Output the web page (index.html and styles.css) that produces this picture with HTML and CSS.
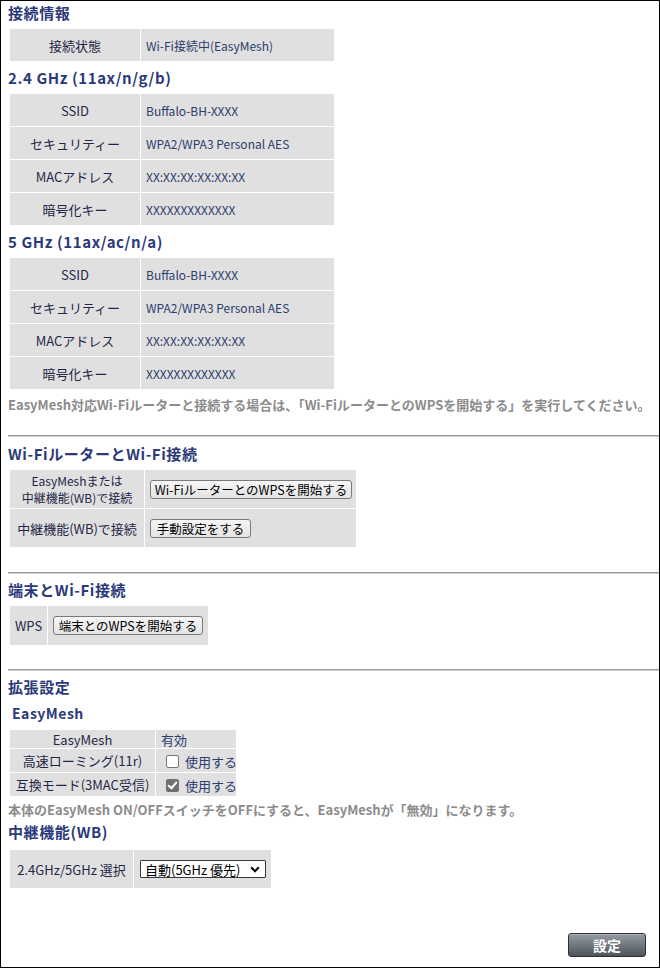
FILE: index.html
```html
<!DOCTYPE html>
<html lang="ja">
<head>
<meta charset="utf-8">
<title>接続情報</title>
<link rel="stylesheet" href="styles.css">
</head>
<body>
<div class="page">
  <h2 class="sec-title first">接続情報</h2>
  <table class="grid g-info">
    <tr class="r32"><th>接続状態</th><td>Wi-Fi接続中(EasyMesh)</td></tr>
  </table>

  <h2 class="sec-title">2.4 GHz (11ax/n/g/b)</h2>
  <table class="grid g-info">
    <tr class="r32"><th>SSID</th><td>Buffalo-BH-XXXX</td></tr>
    <tr class="r32"><th>セキュリティー</th><td>WPA2/WPA3 Personal AES</td></tr>
    <tr class="r32"><th>MACアドレス</th><td>XX:XX:XX:XX:XX:XX</td></tr>
    <tr class="r32"><th>暗号化キー</th><td>XXXXXXXXXXXXX</td></tr>
  </table>

  <h2 class="sec-title">5 GHz (11ax/ac/n/a)</h2>
  <table class="grid g-info">
    <tr class="r32"><th>SSID</th><td>Buffalo-BH-XXXX</td></tr>
    <tr class="r32"><th>セキュリティー</th><td>WPA2/WPA3 Personal AES</td></tr>
    <tr class="r32"><th>MACアドレス</th><td>XX:XX:XX:XX:XX:XX</td></tr>
    <tr class="r32"><th>暗号化キー</th><td>XXXXXXXXXXXXX</td></tr>
  </table>

  <p class="note n1">EasyMesh対応Wi-Fiルーターと接続する場合は、「Wi-FiルーターとのWPSを開始する」を実行してください。</p>

  <hr class="rule rule1">
  <h2 class="sec-title after-rule">Wi-FiルーターとWi-Fi接続</h2>
  <table class="grid g-router">
    <tr class="r38"><th class="two-line"><span class="ln">EasyMeshまたは</span><span class="ln">中継機能(WB)で接続</span></th><td><button class="btn btn-router">Wi-FiルーターとのWPSを開始する</button></td></tr>
    <tr class="r38"><th>中継機能(WB)で接続</th><td><button class="btn btn-manual">手動設定をする</button></td></tr>
  </table>

  <hr class="rule rule2">
  <h2 class="sec-title after-rule2">端末とWi-Fi接続</h2>
  <table class="grid g-wps">
    <tr class="r39"><th>WPS</th><td><button class="btn btn-wps">端末とのWPSを開始する</button></td></tr>
  </table>

  <hr class="rule rule3">
  <h2 class="sec-title after-rule2 before-sub">拡張設定</h2>
  <h3 class="sub-title">EasyMesh</h3>
  <table class="grid g-mesh">
    <tr class="r18"><th>EasyMesh</th><td>有効</td></tr>
    <tr class="r23"><th>高速ローミング(11r)</th><td><span class="check"><span class="cb"></span><span class="cb-label">使用する</span></span></td></tr>
    <tr class="r23"><th>互換モード(3MAC受信)</th><td><span class="check"><span class="cb on"><svg viewBox="0 0 13 13" width="13" height="13"><path d="M2.8 6.8 L5.4 9.3 L10.2 3.6" fill="none" stroke="#fff" stroke-width="2.2" stroke-linecap="round" stroke-linejoin="round"/></svg></span><span class="cb-label">使用する</span></span></td></tr>
  </table>
  <p class="note n2">本体のEasyMesh ON/OFFスイッチをOFFにすると、EasyMeshが「無効」になります。</p>

  <h2 class="sec-title relay-title">中継機能(WB)</h2>
  <table class="grid g-relay">
    <tr class="r38"><th>2.4GHz/5GHz 選択</th><td><span class="select"><span class="select-text">自動(5GHz 優先)</span><svg class="chev" viewBox="0 0 10 7" width="10" height="7"><path d="M1.2 1.3 L5 5.2 L8.8 1.3" fill="none" stroke="#000" stroke-width="2"/></svg></span></td></tr>
  </table>

  <div class="footer">
    <button class="save">設定</button>
  </div>
</div>
</body>
</html>
```
FILE: styles.css
```css
* { box-sizing: border-box; }
html, body { margin: 0; padding: 0; background: #fff; }
body {
  font-family: "Noto Sans CJK JP", "Noto Sans", sans-serif;
  color: #1f2747;
}
.page {
  width: 660px;
  height: 968px;
  border: 1px solid #000;
  padding: 3px 0 10px 7px;
  display: flex;
  flex-direction: column;
  align-items: flex-start;
}
.sec-title {
  margin: 7px 0;
  font-size: 15px;
  line-height: 17px;
  letter-spacing: 0.6px;
  font-weight: bold;
  color: #2b3a7b;
}
.sec-title.first { margin-top: 0; }
.sec-title.after-rule { margin-top: 8px; }
.sec-title.after-rule2 { margin-top: 7px; }
.sec-title.before-sub { margin-bottom: 0; }
.sec-title.relay-title { margin: 5px 0 9px; }
.sub-title {
  margin: 10px 0 8px 4px;
  font-size: 14px;
  line-height: 16px;
  letter-spacing: 0.5px;
  font-weight: bold;
  color: #2b3a7b;
}

.grid {
  border-collapse: separate;
  border-spacing: 1px;
  margin: 0 0 0 1px;
  table-layout: fixed;
}
.grid th, .grid td {
  background: #e0e0e0;
  padding: 0 5px;
  vertical-align: middle;
  white-space: nowrap;
}
.grid th {
  font-weight: normal;
  text-align: center;
  font-size: 13px;
  line-height: 15px;
  color: #1f2747;
  padding: 0 2px;
}
.grid td {
  text-align: left;
  font-size: 12px;
  line-height: 15px;
  color: #2d3d6d;
}
.r32 th, .r32 td { height: 32px; }
.r38 th, .r38 td { height: 38px; }
.r39 th, .r39 td { height: 39px; }
.r18 th, .r18 td { height: 18px; }
.r23 th, .r23 td { height: 23px; }

.g-info { width: 326px; }
.g-info th { width: 130px; }
.g-router { width: 348px; }
.g-router th { width: 134px; }
.g-wps { width: 200px; }
.g-wps th { width: 37px; }
.g-mesh { width: 228px; }
.g-mesh th { width: 145px; }
.g-mesh td { font-size: 13px; }
.g-relay { width: 263px; }
.g-relay th { width: 123px; }

.grid th.two-line {
  font-size: 12px;
  line-height: 17.5px;
  padding: 0;
}
.two-line .ln {
  display: block;
  height: 17.5px;
  line-height: 17.5px;
}

.note {
  margin: 7px 0 0;
  font-size: 13px;
  line-height: 16px;
  font-weight: bold;
  color: #8c8c8c;
  white-space: nowrap;
}
.note.n2 { margin-top: 5px; }

.rule {
  align-self: stretch;
  height: 0;
  margin: 0;
  border: 0;
  border-top: 1px solid #9a9a9a;
  border-bottom: 1px solid #cfcfcf;
}
.rule1 { margin-top: 22px; }
.rule2 { margin-top: 24px; }
.rule3 { margin-top: 23px; }

.btn {
  font-family: inherit;
  font-size: 12.5px;
  line-height: 15px;
  height: 19px;
  padding: 0;
  color: #000;
  background: linear-gradient(#f6f6f6, #e4e4e4);
  border: 1px solid #7a7a7a;
  border-radius: 3px;
  vertical-align: middle;
  text-align: center;
  white-space: nowrap;
}
.btn-router { width: 202px; }
.btn-manual { width: 101px; }
.btn-wps { width: 150px; }

.check {
  display: inline-flex;
  align-items: center;
  vertical-align: middle;
}
.cb {
  display: inline-block;
  width: 13px;
  height: 13px;
  margin-left: 5px;
  border: 1px solid #767676;
  border-radius: 2px;
  background: #fff;
  position: relative;
}
.cb.on {
  background: #707070;
  border-color: #707070;
}
.cb.on svg {
  position: absolute;
  left: -1px;
  top: -1px;
}
.cb-label {
  margin-left: 6px;
  font-size: 13px;
  color: #2d3d6d;
}

.select {
  display: inline-flex;
  align-items: center;
  justify-content: space-between;
  width: 126px;
  height: 18px;
  margin-left: 1px;
  padding: 0 5px 0 4px;
  background: #fff;
  border: 1px solid #3a3a3a;
  border-radius: 1px;
  vertical-align: middle;
}
.select-text {
  font-size: 13px;
  line-height: 15px;
  color: #000;
}
.chev { display: block; }

.footer {
  margin-top: auto;
  align-self: flex-end;
  padding-right: 13px;
}
.save {
  display: block;
  width: 78px;
  height: 24px;
  padding: 0;
  font-family: inherit;
  font-size: 14px;
  font-weight: bold;
  color: #fff;
  background: linear-gradient(#959ba3, #4e545c);
  border: 1px solid #2c3035;
  border-radius: 3px;
  box-shadow: inset 0 1px 0 rgba(255,255,255,0.25);
}
```
